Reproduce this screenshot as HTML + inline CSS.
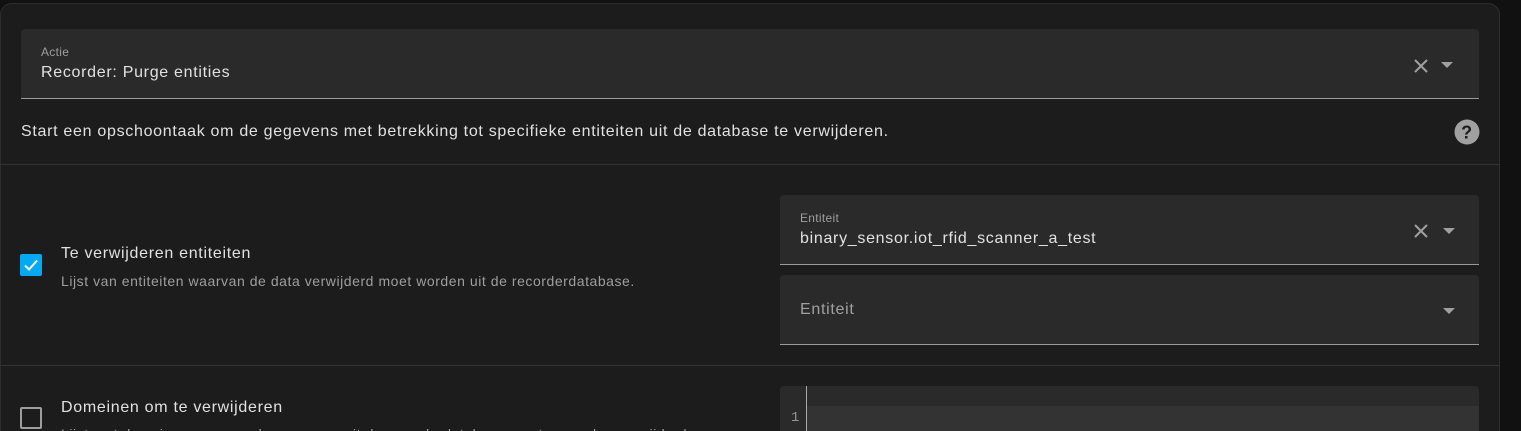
<!DOCTYPE html>
<html style="width:1521px;height:431px;overflow:hidden"><head><style>
*{margin:0;padding:0;box-sizing:border-box}
body{width:1521px;height:431px;background:#111;overflow:hidden;font-family:"Liberation Sans",sans-serif;color:#e1e1e1;position:relative;letter-spacing:0.7px}
.wrap{position:absolute;left:0;top:0;width:1521px;height:431px;overflow:hidden}
.card{position:absolute;left:0;top:3px;width:1500px;height:440px;background:#1c1c1c;border:1px solid #2e2e2e;border-radius:12px}
.f{position:absolute;background:#2a2a2a;border-radius:4px 4px 0 0;border-bottom:1px solid #9a9a9a}
.lbl{position:absolute;font-size:12px;color:#9e9e9e;letter-spacing:0.3px}
.val{position:absolute;font-size:16px;color:#e1e1e1}
.abs{position:absolute}
.hr{position:absolute;left:0;width:1500px;height:1px;background:#333}
</style></head><body><div class="wrap">
<div class="card"></div>
<div class="f" style="left:21px;top:29px;width:1458px;height:70px">
 <div class="lbl" style="left:20px;top:16px">Actie</div>
 <div class="val" style="left:20px;top:35px">Recorder: Purge entities</div>
 <svg class="abs" style="left:1392px;top:29px" width="16" height="16" viewBox="0 0 16 16"><path d="M2 2L14 14M14 2L2 14" stroke="#a0a0a0" stroke-width="2"/></svg>
 <svg class="abs" style="left:1420px;top:33px" width="12" height="6"><path d="M0 0H12L6 6Z" fill="#a0a0a0"/></svg>
</div>
<div class="abs" style="left:21px;top:123px;font-size:16px;color:#e1e1e1">Start een opschoontaak om de gegevens met betrekking tot specifieke entiteiten uit de database te verwijderen.</div>
<svg class="abs" style="left:1454px;top:119px" width="26" height="26" viewBox="0 0 26 26"><circle cx="13" cy="13" r="12.5" fill="#a0a0a0"/><text x="13" y="19.5" text-anchor="middle" font-family="Liberation Sans" font-weight="bold" font-size="18" fill="#1c1c1c">?</text></svg>
<div class="hr" style="top:164px"></div>
<div class="abs" style="left:20px;top:254px;width:22px;height:22px;background:#03a9f4;border-radius:2px"></div>
<svg class="abs" style="left:20px;top:254px" width="22" height="22"><path d="M5 11.5L9 15.5L17 6.5" stroke="#fff" stroke-width="2" fill="none"/></svg>
<div class="abs" style="left:61px;top:245px;font-size:16px;color:#e1e1e1">Te verwijderen entiteiten</div>
<div class="abs" style="left:61px;top:273px;font-size:14px;color:#9e9e9e;letter-spacing:0.55px">Lijst van entiteiten waarvan de data verwijderd moet worden uit de recorderdatabase.</div>
<div class="f" style="left:780px;top:195px;width:699px;height:70px">
 <div class="lbl" style="left:20px;top:16px">Entiteit</div>
 <div class="val" style="left:20px;top:35px">binary_sensor.iot_rfid_scanner_a_test</div>
 <svg class="abs" style="left:633px;top:28px" width="16" height="16" viewBox="0 0 16 16"><path d="M2 2L14 14M14 2L2 14" stroke="#a0a0a0" stroke-width="2"/></svg>
 <svg class="abs" style="left:663px;top:33px" width="12" height="6"><path d="M0 0H12L6 6Z" fill="#a0a0a0"/></svg>
</div>
<div class="f" style="left:780px;top:275px;width:699px;height:70px">
 <div class="val" style="left:20px;top:26px;color:#a0a0a0">Entiteit</div>
 <svg class="abs" style="left:663px;top:33px" width="12" height="6"><path d="M0 0H12L6 6Z" fill="#a0a0a0"/></svg>
</div>
<div class="hr" style="top:365px"></div>
<div class="abs" style="left:20px;top:407px;width:22px;height:22px;border:2px solid #9e9e9e;border-radius:2px"></div>
<div class="abs" style="left:61px;top:399px;font-size:16px;color:#e1e1e1">Domeinen om te verwijderen</div>
<div class="abs" style="left:61px;top:426px;font-size:14px;color:#9e9e9e;letter-spacing:0.55px;white-space:nowrap">Lijst met domeinen waarvan de gegevens uit de recorderdatabase moeten worden verwijderd.</div>
<div class="abs" style="left:780px;top:386px;width:699px;height:45px;background:#2a2a2a;border-radius:4px 4px 0 0"></div>
<div class="abs" style="left:806px;top:406px;width:673px;height:25px;background:#333"></div>
<div class="abs" style="left:806px;top:386px;width:1px;height:45px;background:#aaa"></div>
<div class="abs" style="left:791px;top:410px;font-family:'Liberation Mono',monospace;font-size:14px;color:#8a9a94;letter-spacing:0">1</div>
</div></body></html>
